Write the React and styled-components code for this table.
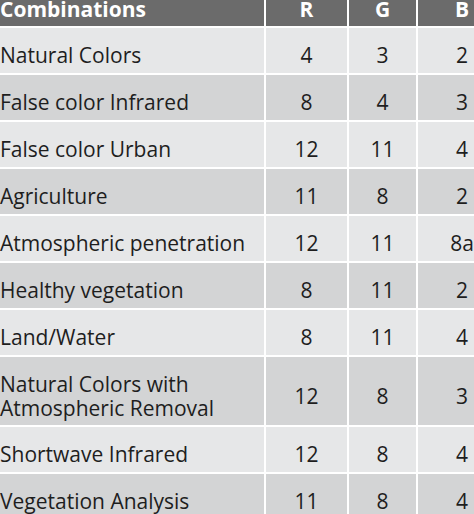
import React from "react";
import styled, { createGlobalStyle } from "styled-components";

const GlobalStyle = createGlobalStyle`
  html, body {
    margin: 0;
    padding: 0;
    background: #ffffff;
  }
  body {
    font-family: "Open Sans", "Liberation Sans", sans-serif;
  }
`;

const Frame = styled.div`
  width: 474px;
  height: 514px;
  overflow: hidden;
  background: #ffffff;
`;

const Table = styled.table`
  table-layout: fixed;
  border-collapse: separate;
  border-spacing: 2px;
  width: 516px;
  margin: -21px 0 0 -10px;
  color: #1e1e1e;
  font-size: 21px;
`;

const HeadCell = styled.th`
  background: #6b6b6b;
  color: #ffffff;
  font-weight: 700;
  height: 45px;
  box-sizing: border-box;
  padding: 16px 8px 5px;
  line-height: 24px;
  text-align: ${({ $align }) => $align || "center"};
`;

const Row = styled.tr`
  background: ${({ $shade }) => ($shade ? "#d3d4d5" : "#e6e7e8")};
`;

const NameCell = styled.td`
  height: 45px;
  box-sizing: border-box;
  padding: 16px 8px 5px;
  line-height: 23.5px;
  text-align: left;
  white-space: pre-line;
`;

const NumCell = styled.td`
  box-sizing: border-box;
  padding: 16px 4px 5px;
  line-height: 23.5px;
  text-align: center;
  vertical-align: middle;
`;

const rows = [
  ["Natural Colors", "4", "3", "2"],
  ["False color Infrared", "8", "4", "3"],
  ["False color Urban", "12", "11", "4"],
  ["Agriculture", "11", "8", "2"],
  ["Atmospheric penetration", "12", "11", "8a"],
  ["Healthy vegetation", "8", "11", "2"],
  ["Land/Water", "8", "11", "4"],
  ["Natural Colors with\nAtmospheric Removal", "12", "8", "3"],
  ["Shortwave Infrared", "12", "8", "4"],
  ["Vegetation Analysis", "11", "8", "4"],
];

export default function App() {
  return (
    <>
      <GlobalStyle />
      <Frame>
        <Table>
          <colgroup>
            <col style={{ width: 272 }} />
            <col style={{ width: 81 }} />
            <col style={{ width: 67 }} />
            <col style={{ width: 88 }} />
          </colgroup>
          <thead>
            <tr>
              <HeadCell $align="left">Combinations</HeadCell>
              <HeadCell>R</HeadCell>
              <HeadCell>G</HeadCell>
              <HeadCell>B</HeadCell>
            </tr>
          </thead>
          <tbody>
            {rows.map(([name, r, g, b], i) => (
              <Row key={name} $shade={i % 2 === 1}>
                <NameCell>{name}</NameCell>
                <NumCell>{r}</NumCell>
                <NumCell>{g}</NumCell>
                <NumCell>{b}</NumCell>
              </Row>
            ))}
          </tbody>
        </Table>
      </Frame>
    </>
  );
}
